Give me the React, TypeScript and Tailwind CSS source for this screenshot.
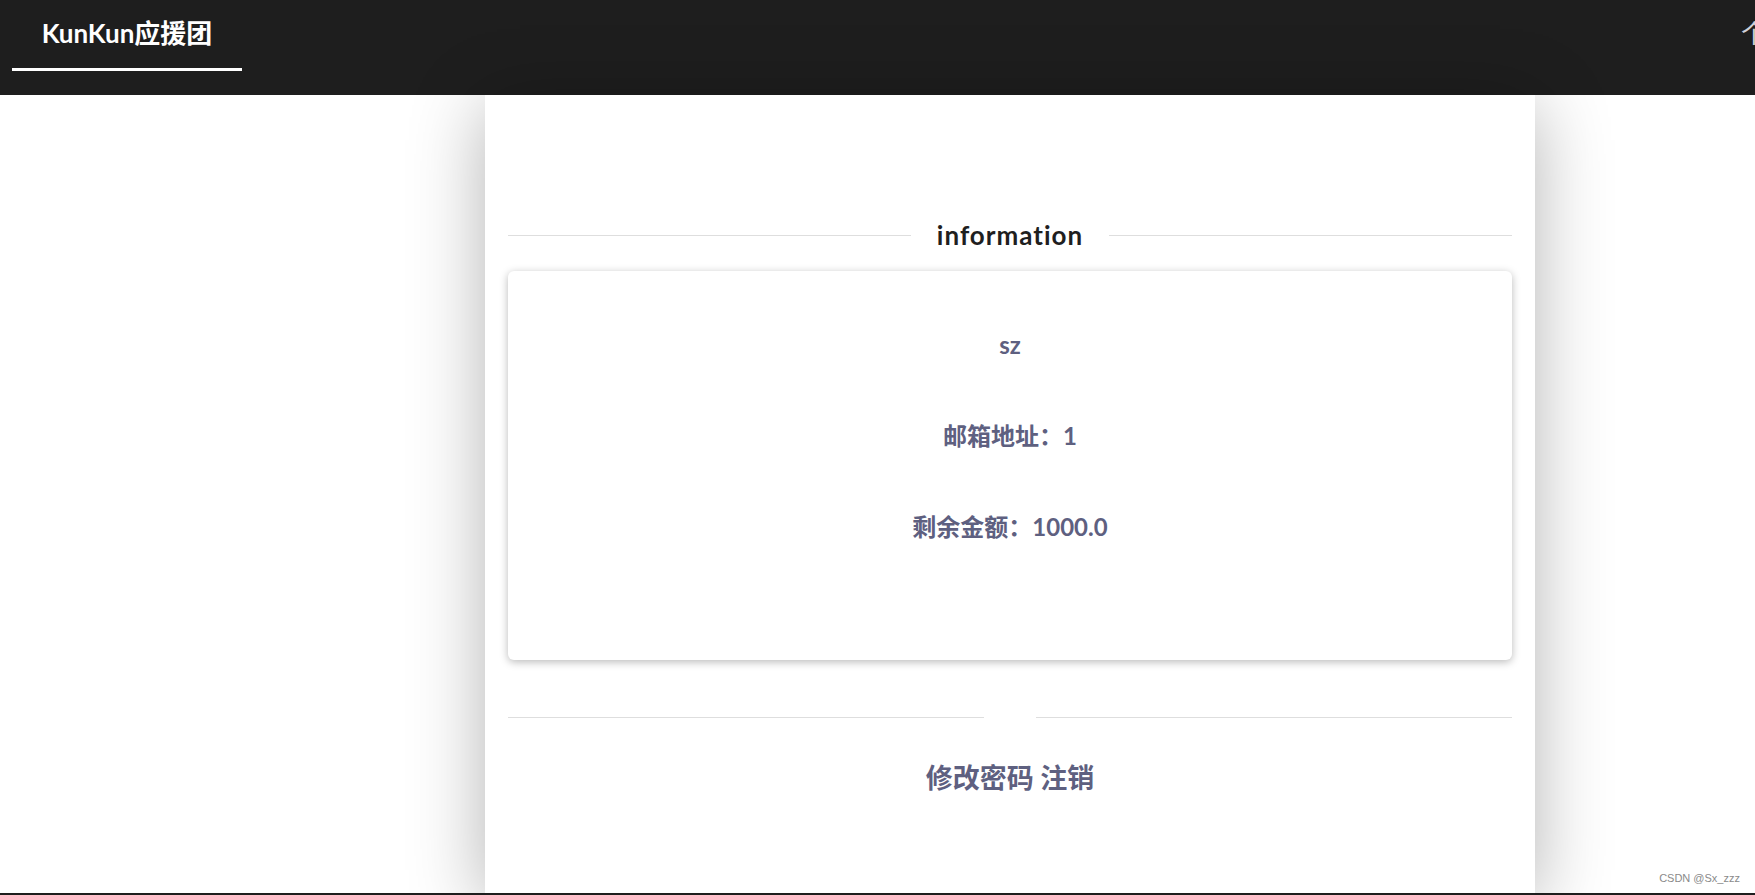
const font = "font-['Lato','Noto_Sans_CJK_SC',sans-serif]";

function Divider({ label }: { label?: string }) {
  return (
    <div className="flex items-center h-[34px]">
      <div className="flex-1 h-px bg-[#dedede]" />
      {label ? (
        <span className="px-[26px] text-[26px] leading-[34px] font-bold tracking-[1px] text-[#1f1f1f]">
          {label}
        </span>
      ) : (
        <span className="w-[52px]" />
      )}
      <div className="flex-1 h-px bg-[#dedede]" />
    </div>
  );
}

export default function App() {
  const rows = ['sz', '邮箱地址：1', '剩余金额：1000.0'];

  return (
    <div className={`${font} relative min-h-[895px] h-[895px] overflow-hidden bg-white`}>
      <header className="flex h-[95px] bg-[#1e1e1e] overflow-hidden">
        <div className="ml-[12px] w-[230px] h-[71px] shrink-0 pt-[15px] pb-[17px] border-b-[3px] border-white text-center text-white text-[26px] leading-[36px] font-bold">
          KunKun应援团
        </div>
        <div className="ml-[1499px] shrink-0 pt-[15px] whitespace-nowrap text-[#cfd0d8] text-[26px] leading-[36px]">
          个人中心
        </div>
      </header>

      <main className="ml-[485px] w-[1050px] h-[800px] bg-white px-[23px] pt-[123px] shadow-[0_10px_70px_rgba(0,0,0,0.3)]">
        <Divider label="information" />

        <div className="mt-[19px] h-[389px] rounded-[6px] bg-white pt-[59px] shadow-[0_2px_8px_rgba(0,0,0,0.28)] flex flex-col items-center gap-[61px]">
          {rows.map(r => (
            <div key={r} className="h-[30px] leading-[30px] text-[24px] font-bold text-[#5e6080]">
              {r}
            </div>
          ))}
        </div>

        <div className="mt-[40px]">
          <Divider />
        </div>

        <div className="mt-[26px] text-center text-[27px] leading-[36px] font-bold text-[#5e6080]">
          修改密码 注销
        </div>
      </main>

      <div className="absolute right-[15px] bottom-[9px] text-[11px] text-[#8a8a8a] font-['Liberation_Sans',sans-serif]">
        CSDN @Sx_zzz
      </div>
      <div className="absolute left-0 right-0 bottom-0 h-[2px] bg-[#1e1e1e]" />
    </div>
  );
}
